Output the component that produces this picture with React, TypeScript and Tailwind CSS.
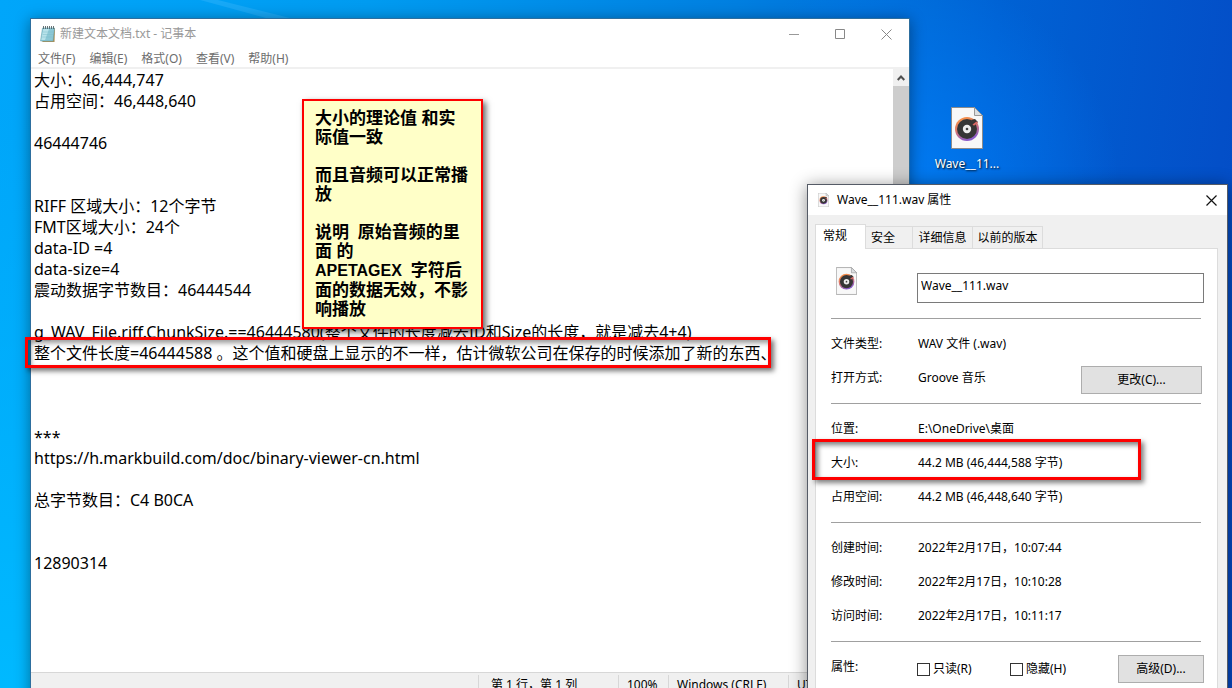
import { useId } from "react";

const noteText = [
  "大小：46,444,747",
  "占用空间：46,448,640",
  "",
  "46444746",
  "",
  "",
  "RIFF 区域大小：12个字节",
  "FMT区域大小：24个",
  "data-ID =4",
  "data-size=4",
  "震动数据字节数目：46444544",
  "",
  "g_WAV_File.riff.ChunkSize.==46444580(整个文件的长度减去ID和Size的长度，就是减去4+4)",
  "整个文件长度=46444588 。这个值和硬盘上显示的不一样，估计微软公司在保存的时候添加了新的东西、",
  "",
  "",
  "",
  "***",
  "https://h.markbuild.com/doc/binary-viewer-cn.html",
  "",
  "总字节数目：C4 B0CA",
  "",
  "",
  "12890314",
].join("\n");

function WaveIcon({ className }: { className: string }) {
  const id = useId();
  return (
    <svg viewBox="0 0 32 42" className={className} aria-hidden="true">
      <defs>
        <linearGradient id={id} x1="0" y1="0" x2="0.4" y2="1">
          <stop offset="0" stopColor="#ff9a3c" />
          <stop offset="0.5" stopColor="#e07a6a" />
          <stop offset="1" stopColor="#8a5cc8" />
        </linearGradient>
      </defs>
      <path d="M.5.5H23.5L31.5 8.500V41.500H.5Z" fill="#f8f8f8" stroke="#8c8c8c" />
      <path d="M23.500.500V8.500H31.500Z" fill="#dcdfe2" stroke="#999" />
      <circle cx="16" cy="22" r="12" fill={`url(#${id})`} />
      <circle cx="16" cy="22" r="10" fill="#363636" />
      <path d="M20 13L24 12L27 15L23 18.500L21 18L23 15.500Z" fill="#363636" />
      <path d="M21.500 17.500L25.500 14.500L27 15.500L23 18.800Z" fill="#dc6b66" />
      <circle cx="16" cy="22" r="4.200" fill="#eee" />
      <circle cx="16" cy="22" r="1.300" fill="#444" />
    </svg>
  );
}

function NotepadIcon() {
  return (
    <svg viewBox="0 0 16 17" className="h-[17px] w-4" aria-hidden="true">
      <path d="M3.500 2H15L14.500 16H3L1 14.500Z" fill="#a98f57" />
      <path d="M2.500 2H14.500L13 15H.5Z" fill="#8cc8d6" stroke="#5f9dab" strokeWidth=".5" />
      <path d="M3.300 3H9L5 14H1.300Z" fill="#b8e2ea" />
      <path d="M3 6H13.500M2.600 8.500H13M2.200 11H12.700" stroke="#7fbecb" strokeWidth=".5" />
      <path d="M3.500 0V3M5.500 0V3M7.500 0V3M9.500 0V3M11.500 0V3M13.500 0V3" stroke="#556468" strokeWidth=".9" />
    </svg>
  );
}

function Notepad() {
  return (
    <section className="absolute top-[18px] -bottom-3 left-[30px] flex w-[880px] flex-col border border-[#2d6e9e] bg-white shadow-[0_2px_14px_rgba(0,0,0,0.4)]">
      <header className="flex h-[30px] shrink-0 items-center">
        <div className="flex flex-1 items-center gap-1 pl-[9px] text-[#999999]">
          <NotepadIcon />
          <h1 className="text-xs">新建文本文档.txt - 记事本</h1>
        </div>
        <button aria-label="最小化" className="flex h-full w-[46px] items-center justify-center">
          <svg viewBox="0 0 10 10" className="size-2.5" stroke="#999"><path d="M0 5.500H10" /></svg>
        </button>
        <button aria-label="最大化" className="flex h-full w-[46px] items-center justify-center">
          <svg viewBox="0 0 10 10" className="size-2.5" stroke="#888" fill="none"><path d="M.5.500H9.500V9.500H.5Z" /></svg>
        </button>
        <button aria-label="关闭" className="flex h-full w-[46px] items-center justify-center">
          <svg viewBox="0 0 11 11" className="size-[11px]" stroke="#888"><path d="M.5.500L10.500 10.500M10.500.500L.5 10.500" /></svg>
        </button>
      </header>
      <nav className="flex h-5 shrink-0 items-center gap-3.5 border-b-2 border-[#f0f0f0] pt-0.5 pl-[7px] text-xs text-[#6d6d6d]">
        <button>文件(F)</button>
        <button>编辑(E)</button>
        <button>格式(O)</button>
        <button>查看(V)</button>
        <button>帮助(H)</button>
      </nav>
      <div className="flex min-h-0 flex-1">
        <textarea
          aria-label="文本内容"
          spellCheck={false}
          wrap="off"
          defaultValue={noteText}
          className="block flex-1 resize-none overflow-hidden bg-white pt-px pl-[3px] text-base leading-[21px] text-black outline-none"
        />
        <div className="flex w-4 flex-col bg-[#cdcdcd]">
          <button aria-label="向上滚动" className="flex h-[17px] items-center justify-center bg-[#f0f0f0]">
            <svg viewBox="0 0 8 6" className="h-1.5 w-2" fill="none" stroke="#505050" strokeWidth="2"><path d="M.7 5L4 1.500L7.300 5" /></svg>
          </button>
        </div>
      </div>
      <footer className="flex h-[27px] shrink-0 border-t border-[#d7d7d7] bg-[#f0f0f0] pt-0.5 text-xs leading-5 text-black">
        <span className="flex-1" />
        <span className="w-[140px] border-l border-[#d7d7d7] pl-3">第 1 行，第 1 列</span>
        <span className="w-[50px] border-l border-[#d7d7d7] pl-2">100%</span>
        <span className="w-[120px] border-l border-[#d7d7d7] pl-2">Windows (CRLF)</span>
        <span className="w-[121px] border-l border-[#d7d7d7] pl-2">UTF-8</span>
      </footer>
    </section>
  );
}

function Row({ label, value }: { label: string; value: string }) {
  return (
    <div className="flex h-[34px] items-center">
      <dt className="w-[87px]">{label}</dt>
      <dd>{value}</dd>
    </div>
  );
}

function Properties() {
  return (
    <section className="absolute top-[184px] -bottom-16 left-[807px] flex w-[421px] flex-col border border-[#555b66] bg-[#f0f0f0] text-xs text-black shadow-[0_2px_16px_rgba(0,0,0,0.45)]">
      <header className="flex h-[30px] shrink-0 items-center gap-2 bg-white pr-px pl-2.5">
        <WaveIcon className="h-3.5 w-[11px]" />
        <h2 className="flex-1">Wave__111.wav 属性</h2>
        <button aria-label="关闭" className="flex h-[29px] w-[30px] items-center justify-center">
          <svg viewBox="0 0 11 11" className="size-[11px]" stroke="#111" strokeWidth="1.200"><path d="M.5.500L10.500 10.500M10.500.500L.5 10.500" /></svg>
        </button>
      </header>
      <div className="flex min-h-0 flex-1 flex-col pt-[9px] pr-[9px] pl-[7px]">
        <div role="tablist" className="flex h-6 shrink-0 items-end">
          <button role="tab" aria-selected="true" className="z-10 -mb-px h-[25px] w-[51px] border border-b-0 border-[#dcdcdc] bg-white pr-[11px] pb-0.5">常规</button>
          <button role="tab" aria-selected="false" className="h-[22px] w-[46px] border-t border-[#dcdcdc] pr-3">安全</button>
          <button role="tab" aria-selected="false" className="h-[22px] w-[60px] border-t border-l border-[#dcdcdc]">详细信息</button>
          <button role="tab" aria-selected="false" className="h-[22px] w-[71px] border border-b-0 border-[#dcdcdc]">以前的版本</button>
        </div>
        <div className="flex-1 border border-[#dcdcdc] bg-white pr-4 pl-[15px]">
          <div className="flex h-[69px] items-start pt-[18px]">
            <div className="w-[86px] pl-[5px]"><WaveIcon className="h-7 w-[21px]" /></div>
            <input aria-label="文件名" defaultValue="Wave__111.wav" className="mt-1.5 -mr-[3px] h-[30px] min-w-0 flex-1 border border-[#7a7a7a] bg-white px-[3px] pb-1.5 outline-none" />
          </div>
          <div className="border-y border-[#a0a0a0] pt-2 pb-2">
            <div className="flex items-end justify-between">
              <dl><Row label="文件类型:" value="WAV 文件 (.wav)" /><Row label="打开方式:" value="Groove 音乐" /></dl>
              <button className="-mr-px mb-px h-7 w-[121px] border border-[#adadad] bg-[#e1e1e1]">更改(C)...</button>
            </div>
          </div>
          <dl className="border-b border-[#a0a0a0] py-2">
            <Row label="位置:" value="E:\OneDrive\桌面" />
            <Row label="大小:" value="44.2 MB (46,444,588 字节)" />
            <Row label="占用空间:" value="44.2 MB (46,448,640 字节)" />
          </dl>
          <dl className="border-b border-[#a0a0a0] py-2">
            <Row label="创建时间:" value="2022年2月17日，10:07:44" />
            <Row label="修改时间:" value="2022年2月17日，10:10:28" />
            <Row label="访问时间:" value="2022年2月17日，10:11:17" />
          </dl>
          <div className="flex items-center pt-[13px]">
            <span className="w-[86px] pb-1">属性:</span>
            <label className="flex w-[93px] items-center gap-[3px]">
              <input type="checkbox" className="size-[13px] appearance-none border border-[#333] bg-white checked:bg-[#333]" />只读(R)
            </label>
            <label className="flex flex-1 items-center gap-[3px]">
              <input type="checkbox" className="size-[13px] appearance-none border border-[#333] bg-white checked:bg-[#333]" />隐藏(H)
            </label>
            <button className="-mr-[3px] h-7 w-[86px] border border-[#adadad] bg-[#e1e1e1]">高级(D)...</button>
          </div>
        </div>
      </div>
    </section>
  );
}

export default function App() {
  return (
    <main className="relative h-screen overflow-hidden bg-[linear-gradient(97deg,#00a6fa_0%,#009bf0_28%,#007fe0_56%,#0062d4_76%,#0449c4_100%)] font-['Noto_Sans','Noto_Sans_CJK_SC',sans-serif]">
      <div className="absolute inset-0 bg-[radial-gradient(circle_at_900px_190px,rgba(0,130,255,0.7),transparent_220px),radial-gradient(ellipse_at_0%_100%,#00b9ff,transparent_60%)]" />
      <svg className="absolute top-0 left-[200px] h-[18px] w-[90px]" viewBox="0 0 90 18" aria-hidden="true">
        <path d="M0 0H18L90 18H66Z" fill="#5cc4ff" opacity=".25" />
      </svg>
      <button className="absolute top-[107px] left-[929px] flex w-[76px] flex-col items-center gap-[7px] text-xs text-white">
        <WaveIcon className="h-[42px] w-8" />
        <span className="[text-shadow:1px_1px_2px_#000]">Wave__11...</span>
      </button>
      <Notepad />
      <Properties />
      <div className="pointer-events-none absolute top-[337px] left-[25px] h-[31px] w-[746px] border-[3px] border-[#fe0000] shadow-[3px_3px_5px_rgba(0,0,0,0.55),inset_3px_3px_5px_rgba(0,0,0,0.4)]" />
      <div className="pointer-events-none absolute top-[439px] left-[812px] h-[41px] w-[329px] border-[3px] border-[#fe0000] shadow-[3px_3px_5px_rgba(0,0,0,0.5),inset_3px_3px_5px_rgba(0,0,0,0.5)]" />
      <aside className="absolute top-[99px] left-[302px] w-[181px] border-2 border-[#fe0000] bg-[#ffffc8] px-[11px] pt-[7px] pb-[9px] text-[17px] leading-[19px] font-bold text-black shadow-[3px_3px_6px_rgba(0,0,0,0.6)]">
        <p>大小的理论值 和实<br />际值一致</p>
        <p className="mt-[19px]">而且音频可以正常播<br />放</p>
        <p className="mt-[19px]">说明&nbsp; 原始音频的里<br />面 的<br /><span className="font-['Liberation_Sans',sans-serif] text-base leading-[19px]">APETAGEX</span>&nbsp; 字符后<br />面的数据无效，不影<br />响播放</p>
      </aside>
    </main>
  );
}
